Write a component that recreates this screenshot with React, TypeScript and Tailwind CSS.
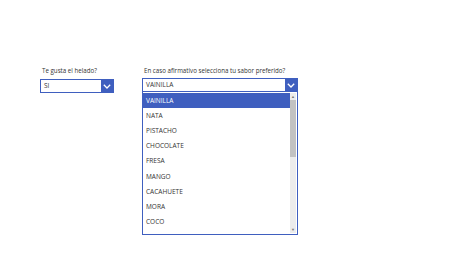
const flavours = ['VAINILLA', 'NATA', 'PISTACHO', 'CHOCOLATE', 'FRESA', 'MANGO', 'CACAHUETE', 'MORA', 'COCO']

function Chevron() {
	return (
		<svg width="8" height="5" viewBox="0 0 8 5" fill="none">
			<path d="M0.8 0.8 L4 4 L7.2 0.8" stroke="white" strokeWidth="1.3" />
		</svg>
	)
}

function SelectBox({ value, width }: { value: string; width: string }) {
	return (
		<div className={`flex h-[14px] border border-[#3f5fbf] bg-white ${width}`}>
			<div className="flex-1 flex items-center pl-[3px] text-[6.5px] text-[#333]">{value}</div>
			<div className="w-[12px] bg-[#3f5fbf] flex items-center justify-center">
				<Chevron />
			</div>
		</div>
	)
}

export default function App() {
	return (
		<div
			className="w-[474px] h-[270px] bg-white flex gap-[28px] pl-[40px] pt-[66px]"
			style={{ fontFamily: '"Open Sans", "Liberation Sans", sans-serif' }}
		>
			<div className="w-[74px] flex flex-col">
				<div className="h-[9px] pl-[2px] text-[6.2px] leading-[9px] text-[#333] whitespace-nowrap">
					Te gusta el helado?
				</div>
				<div className="mt-[4px]">
					<SelectBox value="SI" width="w-[74px]" />
				</div>
			</div>
			<div className="w-[156px] flex flex-col">
				<div className="h-[9px] pl-[2px] text-[6.2px] leading-[9px] text-[#333] whitespace-nowrap">
					En caso afirmativo selecciona tu sabor preferido?
				</div>
				<div className="mt-[3px]">
					<SelectBox value="VAINILLA" width="w-[156px]" />
				</div>
				<div className="h-[143px] border border-t-0 border-[#3f5fbf] bg-white flex">
					<div className="flex-1 flex flex-col pt-[1px]">
						{flavours.map((f, i) => (
							<div
								key={f}
								className={
									i === 0
										? 'h-[15.2px] flex items-center pl-[3px] text-[6.5px] text-white bg-[#3f5fbf]'
										: 'h-[15.2px] flex items-center pl-[3px] text-[6.5px] text-[#333]'
								}
							>
								{f}
							</div>
						))}
					</div>
					<div className="w-[6px] mr-[1px] my-[1px] bg-[#ececec] flex flex-col items-center">
						<div className="h-[7px] flex items-center justify-center text-[4px] text-[#777]">▲</div>
						<div className="w-[6px] h-[57px] bg-[#c2c2c2]" />
						<div className="flex-1" />
						<div className="h-[7px] flex items-center justify-center text-[4px] text-[#777]">▼</div>
					</div>
				</div>
			</div>
		</div>
	)
}
